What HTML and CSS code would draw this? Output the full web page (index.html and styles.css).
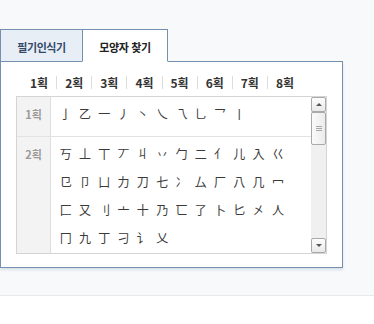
FILE: index.html
```html
<!DOCTYPE html>
<html lang="ko">
<head>
<meta charset="utf-8">
<title>모양자 찾기</title>
<link rel="stylesheet" href="styles.css">
</head>
<body>
<div class="page">
  <div class="stage">
    <div class="widget">
      <div class="tabs">
        <div class="tab">필기인식기</div>
        <div class="tab active">모양자 찾기</div>
      </div>
      <div class="panel">
        <ul class="strokes">
          <li>1획</li><li>2획</li><li>3획</li><li>4획</li><li>5획</li><li>6획</li><li>7획</li><li>8획</li>
        </ul>
        <div class="table">
          <div class="view">
            <div class="row">
              <div class="label">1획</div>
              <div class="chars"><span>亅</span><span>乙</span><span>一</span><span>丿</span><span>丶</span><span>乀</span><span>乁</span><span>乚</span><span>乛</span><span>丨</span></div>
            </div>
            <div class="row">
              <div class="label">2획</div>
              <div class="chars"><span>丂</span><span>丄</span><span>丅</span><span>丆</span><span>丩</span><span>丷</span><span>勹</span><span>二</span><span>亻</span><span>儿</span><span>入</span><span>巜</span><span>㔾</span><span>卩</span><span>凵</span><span>力</span><span>刀</span><span>七</span><span>冫</span><span>厶</span><span>厂</span><span>八</span><span>几</span><span>冖</span><span>匚</span><span>又</span><span>刂</span><span>亠</span><span>十</span><span>乃</span><span>匸</span><span>了</span><span>卜</span><span>匕</span><span>㐅</span><span>人</span><span>冂</span><span>九</span><span>丁</span><span>刁</span><span>讠</span><span>乂</span></div>
            </div>
          </div>
          <div class="scrollbar">
            <div class="sb-btn up"></div>
            <div class="sb-track"><div class="sb-thumb"></div></div>
            <div class="sb-btn down"></div>
          </div>
        </div>
      </div>
    </div>
  </div>
  <div class="footer"></div>
</div>
</body>
</html>
```
FILE: styles.css
```css
* { box-sizing: border-box; }
html, body { margin: 0; padding: 0; background: #ffffff; }
body { font-family: "Noto Sans CJK KR", "Noto Sans", sans-serif; color: #333; }

.stage {
  background: #f7f9fb;
  padding: 29px 0 27px;
  border-bottom: 1px solid #e8eaec;
}
.widget { width: 343px; }

.tabs { display: flex; margin-bottom: -1px; }
.tab {
  width: 83px;
  height: 33px;
  padding-top: 10px;
  line-height: 15px;
  font-size: 11px;
  font-weight: 700;
  letter-spacing: -0.4px;
  text-align: center;
  color: #34496a;
  background: #e8eef5;
  border: 1px solid #7590ae;
}
.tab.active {
  width: 86px;
  margin-left: -1px;
  color: #222;
  background: #fff;
  border-bottom-color: #fff;
  position: relative;
  z-index: 1;
}

.panel {
  background: #fff;
  border: 1px solid #7590ae;
  padding: 0 15px 13px;
  box-shadow: 0 2px 2px rgba(120, 145, 175, 0.22);
}

.strokes {
  list-style: none;
  margin: 12px 0 6px;
  padding: 0 0 0 6px;
  display: flex;
  height: 16px;
  align-items: center;
}
.strokes li {
  padding: 0 8px;
  font-size: 12px;
  font-weight: 700;
  line-height: 13px;
  color: #333;
  border-left: 1px solid #dcdcdc;
}
.strokes li:first-child { border-left: 0; }

.table {
  display: flex;
  border: 1px solid #d4d4d4;
  height: 158px;
}
.view { flex: 1; overflow: hidden; }
.row { display: flex; border-bottom: 1px solid #e2e2e2; }
.label {
  width: 34px;
  flex: none;
  background: #f3f3f3;
  border-right: 1px solid #dedede;
  padding-top: 3px;
  line-height: 28px;
  text-align: center;
  font-size: 11px;
  font-weight: 700;
  color: #9a9a9a;
}
.chars {
  flex: 1;
  display: flex;
  flex-wrap: wrap;
  align-content: flex-start;
  padding: 3px 20px 8px 5px;
}
.chars span {
  width: 19.3px;
  text-align: center;
  font-size: 12px;
  line-height: 28px;
  color: #3a3a3a;
}

.scrollbar {
  width: 15px;
  flex: none;
  display: flex;
  flex-direction: column;
  background: #f0f0f0;
}
.sb-btn {
  height: 15px;
  flex: none;
  border: 1px solid #a9a9a9;
  border-radius: 2px;
  background: linear-gradient(#fdfdfd, #e9e9e9);
  display: flex;
  align-items: center;
  justify-content: center;
}
.sb-btn::before {
  content: "";
  width: 0;
  height: 0;
  border-left: 3px solid transparent;
  border-right: 3px solid transparent;
}
.sb-btn.up::before { border-bottom: 3px solid #555; }
.sb-btn.down::before { border-top: 3px solid #555; }
.sb-track { flex: 1; }
.sb-thumb {
  height: 33px;
  border: 1px solid #a9a9a9;
  border-radius: 2px;
  background: linear-gradient(90deg, #fafafa, #ececec);
  display: flex;
  align-items: center;
  justify-content: center;
}
.sb-thumb::before {
  content: "";
  width: 6px;
  height: 5px;
  background: repeating-linear-gradient(#a8a8a8 0 1px, transparent 1px 2px);
}

.footer { height: 29px; background: #fff; }
```
